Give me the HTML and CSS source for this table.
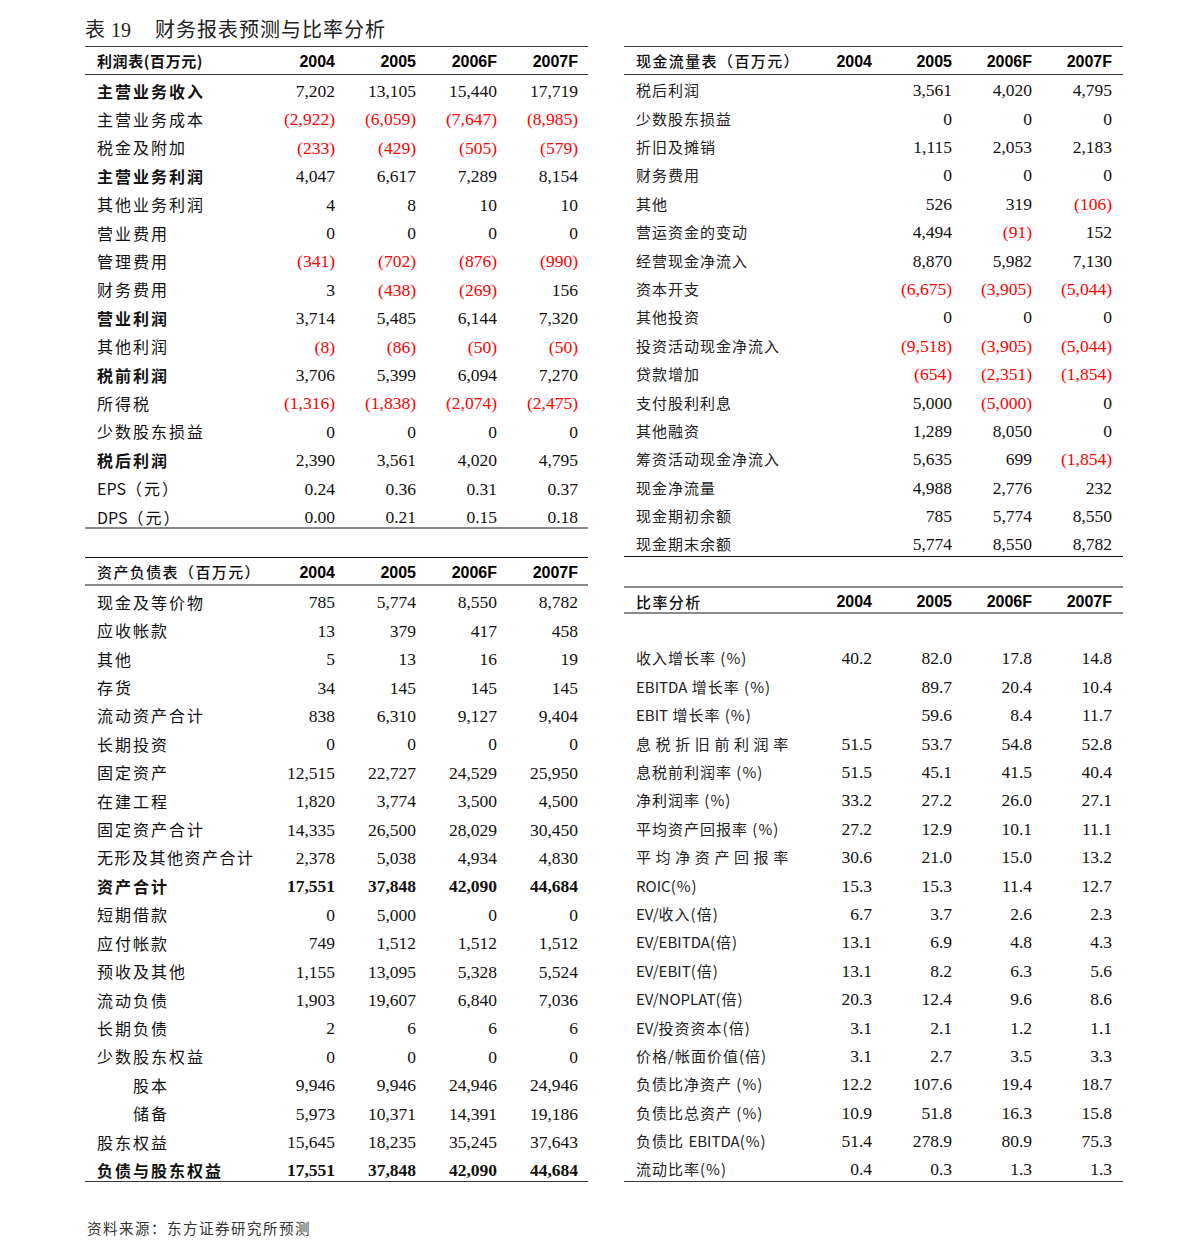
FILE: index.html
```html
<!DOCTYPE html>
<html lang="zh-CN">
<head>
<meta charset="utf-8">
<title>财务报表预测与比率分析</title>
<link rel="stylesheet" href="styles.css">
</head>
<body>
<div class="page">
  <div class="title">表<span class="tnum">19</span><span class="ttext">财务报表预测与比率分析</span></div>
  <div class="cols">
    <div class="col left">
      <div class="tbl">
        <div class="row head t1head"><span class="lab hb">利润表(百万元)</span><span class="y">2004</span><span class="y">2005</span><span class="y">2006F</span><span class="y">2007F</span></div>
        <div class="row"><span class="lab b">主营业务收入</span><span class="n">7,202</span><span class="n">13,105</span><span class="n">15,440</span><span class="n">17,719</span></div>
        <div class="row"><span class="lab">主营业务成本</span><span class="n neg">(2,922)</span><span class="n neg">(6,059)</span><span class="n neg">(7,647)</span><span class="n neg">(8,985)</span></div>
        <div class="row"><span class="lab">税金及附加</span><span class="n neg">(233)</span><span class="n neg">(429)</span><span class="n neg">(505)</span><span class="n neg">(579)</span></div>
        <div class="row"><span class="lab b">主营业务利润</span><span class="n">4,047</span><span class="n">6,617</span><span class="n">7,289</span><span class="n">8,154</span></div>
        <div class="row"><span class="lab">其他业务利润</span><span class="n">4</span><span class="n">8</span><span class="n">10</span><span class="n">10</span></div>
        <div class="row"><span class="lab">营业费用</span><span class="n">0</span><span class="n">0</span><span class="n">0</span><span class="n">0</span></div>
        <div class="row"><span class="lab">管理费用</span><span class="n neg">(341)</span><span class="n neg">(702)</span><span class="n neg">(876)</span><span class="n neg">(990)</span></div>
        <div class="row"><span class="lab">财务费用</span><span class="n">3</span><span class="n neg">(438)</span><span class="n neg">(269)</span><span class="n">156</span></div>
        <div class="row"><span class="lab b">营业利润</span><span class="n">3,714</span><span class="n">5,485</span><span class="n">6,144</span><span class="n">7,320</span></div>
        <div class="row"><span class="lab">其他利润</span><span class="n neg">(8)</span><span class="n neg">(86)</span><span class="n neg">(50)</span><span class="n neg">(50)</span></div>
        <div class="row"><span class="lab b">税前利润</span><span class="n">3,706</span><span class="n">5,399</span><span class="n">6,094</span><span class="n">7,270</span></div>
        <div class="row"><span class="lab">所得税</span><span class="n neg">(1,316)</span><span class="n neg">(1,838)</span><span class="n neg">(2,074)</span><span class="n neg">(2,475)</span></div>
        <div class="row"><span class="lab">少数股东损益</span><span class="n">0</span><span class="n">0</span><span class="n">0</span><span class="n">0</span></div>
        <div class="row"><span class="lab b">税后利润</span><span class="n">2,390</span><span class="n">3,561</span><span class="n">4,020</span><span class="n">4,795</span></div>
        <div class="row"><span class="lab"><span class="lat">EPS</span>（元）</span><span class="n">0.24</span><span class="n">0.36</span><span class="n">0.31</span><span class="n">0.37</span></div>
        <div class="row end-gray"><span class="lab"><span class="lat">DPS</span>（元）</span><span class="n">0.00</span><span class="n">0.21</span><span class="n">0.15</span><span class="n">0.18</span></div>
      </div>
      <div class="row spacer"></div>
      <div class="tbl">
        <div class="row head bshead"><span class="lab">资产负债表（百万元）</span><span class="y">2004</span><span class="y">2005</span><span class="y">2006F</span><span class="y">2007F</span></div>
        <div class="row"><span class="lab">现金及等价物</span><span class="n">785</span><span class="n">5,774</span><span class="n">8,550</span><span class="n">8,782</span></div>
        <div class="row"><span class="lab">应收帐款</span><span class="n">13</span><span class="n">379</span><span class="n">417</span><span class="n">458</span></div>
        <div class="row"><span class="lab">其他</span><span class="n">5</span><span class="n">13</span><span class="n">16</span><span class="n">19</span></div>
        <div class="row"><span class="lab">存货</span><span class="n">34</span><span class="n">145</span><span class="n">145</span><span class="n">145</span></div>
        <div class="row"><span class="lab">流动资产合计</span><span class="n">838</span><span class="n">6,310</span><span class="n">9,127</span><span class="n">9,404</span></div>
        <div class="row"><span class="lab">长期投资</span><span class="n">0</span><span class="n">0</span><span class="n">0</span><span class="n">0</span></div>
        <div class="row"><span class="lab">固定资产</span><span class="n">12,515</span><span class="n">22,727</span><span class="n">24,529</span><span class="n">25,950</span></div>
        <div class="row"><span class="lab">在建工程</span><span class="n">1,820</span><span class="n">3,774</span><span class="n">3,500</span><span class="n">4,500</span></div>
        <div class="row"><span class="lab">固定资产合计</span><span class="n">14,335</span><span class="n">26,500</span><span class="n">28,029</span><span class="n">30,450</span></div>
        <div class="row"><span class="lab tight">无形及其他资产合计</span><span class="n">2,378</span><span class="n">5,038</span><span class="n">4,934</span><span class="n">4,830</span></div>
        <div class="row bn"><span class="lab b">资产合计</span><span class="n">17,551</span><span class="n">37,848</span><span class="n">42,090</span><span class="n">44,684</span></div>
        <div class="row"><span class="lab">短期借款</span><span class="n">0</span><span class="n">5,000</span><span class="n">0</span><span class="n">0</span></div>
        <div class="row"><span class="lab">应付帐款</span><span class="n">749</span><span class="n">1,512</span><span class="n">1,512</span><span class="n">1,512</span></div>
        <div class="row"><span class="lab">预收及其他</span><span class="n">1,155</span><span class="n">13,095</span><span class="n">5,328</span><span class="n">5,524</span></div>
        <div class="row"><span class="lab">流动负债</span><span class="n">1,903</span><span class="n">19,607</span><span class="n">6,840</span><span class="n">7,036</span></div>
        <div class="row"><span class="lab">长期负债</span><span class="n">2</span><span class="n">6</span><span class="n">6</span><span class="n">6</span></div>
        <div class="row"><span class="lab">少数股东权益</span><span class="n">0</span><span class="n">0</span><span class="n">0</span><span class="n">0</span></div>
        <div class="row"><span class="lab ind">股本</span><span class="n">9,946</span><span class="n">9,946</span><span class="n">24,946</span><span class="n">24,946</span></div>
        <div class="row"><span class="lab ind">储备</span><span class="n">5,973</span><span class="n">10,371</span><span class="n">14,391</span><span class="n">19,186</span></div>
        <div class="row"><span class="lab">股东权益</span><span class="n">15,645</span><span class="n">18,235</span><span class="n">35,245</span><span class="n">37,643</span></div>
        <div class="row bn end-dark"><span class="lab b">负债与股东权益</span><span class="n">17,551</span><span class="n">37,848</span><span class="n">42,090</span><span class="n">44,684</span></div>
      </div>
    </div>

    <div class="col right">
      <div class="tbl">
        <div class="row head t1head"><span class="lab">现金流量表（百万元）</span><span class="y">2004</span><span class="y">2005</span><span class="y">2006F</span><span class="y">2007F</span></div>
        <div class="row"><span class="lab">税后利润</span><span class="n"></span><span class="n">3,561</span><span class="n">4,020</span><span class="n">4,795</span></div>
        <div class="row"><span class="lab">少数股东损益</span><span class="n"></span><span class="n">0</span><span class="n">0</span><span class="n">0</span></div>
        <div class="row"><span class="lab">折旧及摊销</span><span class="n"></span><span class="n">1,115</span><span class="n">2,053</span><span class="n">2,183</span></div>
        <div class="row"><span class="lab">财务费用</span><span class="n"></span><span class="n">0</span><span class="n">0</span><span class="n">0</span></div>
        <div class="row"><span class="lab">其他</span><span class="n"></span><span class="n">526</span><span class="n">319</span><span class="n neg">(106)</span></div>
        <div class="row"><span class="lab">营运资金的变动</span><span class="n"></span><span class="n">4,494</span><span class="n neg">(91)</span><span class="n">152</span></div>
        <div class="row"><span class="lab">经营现金净流入</span><span class="n"></span><span class="n">8,870</span><span class="n">5,982</span><span class="n">7,130</span></div>
        <div class="row"><span class="lab">资本开支</span><span class="n"></span><span class="n neg">(6,675)</span><span class="n neg">(3,905)</span><span class="n neg">(5,044)</span></div>
        <div class="row"><span class="lab">其他投资</span><span class="n"></span><span class="n">0</span><span class="n">0</span><span class="n">0</span></div>
        <div class="row"><span class="lab">投资活动现金净流入</span><span class="n"></span><span class="n neg">(9,518)</span><span class="n neg">(3,905)</span><span class="n neg">(5,044)</span></div>
        <div class="row"><span class="lab">贷款增加</span><span class="n"></span><span class="n neg">(654)</span><span class="n neg">(2,351)</span><span class="n neg">(1,854)</span></div>
        <div class="row"><span class="lab">支付股利利息</span><span class="n"></span><span class="n">5,000</span><span class="n neg">(5,000)</span><span class="n">0</span></div>
        <div class="row"><span class="lab">其他融资</span><span class="n"></span><span class="n">1,289</span><span class="n">8,050</span><span class="n">0</span></div>
        <div class="row"><span class="lab">筹资活动现金净流入</span><span class="n"></span><span class="n">5,635</span><span class="n">699</span><span class="n neg">(1,854)</span></div>
        <div class="row"><span class="lab">现金净流量</span><span class="n"></span><span class="n">4,988</span><span class="n">2,776</span><span class="n">232</span></div>
        <div class="row"><span class="lab">现金期初余额</span><span class="n"></span><span class="n">785</span><span class="n">5,774</span><span class="n">8,550</span></div>
        <div class="row end-black"><span class="lab">现金期末余额</span><span class="n"></span><span class="n">5,774</span><span class="n">8,550</span><span class="n">8,782</span></div>
      </div>
      <div class="row spacer"></div>
      <div class="tbl">
        <div class="row head rhead"><span class="lab">比率分析</span><span class="y">2004</span><span class="y">2005</span><span class="y">2006F</span><span class="y">2007F</span></div>
        <div class="row spacer"></div>
        <div class="row"><span class="lab">收入增长率 (%)</span><span class="n">40.2</span><span class="n">82.0</span><span class="n">17.8</span><span class="n">14.8</span></div>
        <div class="row"><span class="lab"><span class="lat">EBITDA</span> 增长率 (%)</span><span class="n"></span><span class="n">89.7</span><span class="n">20.4</span><span class="n">10.4</span></div>
        <div class="row"><span class="lab"><span class="lat">EBIT</span> 增长率 (%)</span><span class="n"></span><span class="n">59.6</span><span class="n">8.4</span><span class="n">11.7</span></div>
        <div class="row"><span class="lab wide">息税折旧前利润率</span><span class="n">51.5</span><span class="n">53.7</span><span class="n">54.8</span><span class="n">52.8</span></div>
        <div class="row"><span class="lab">息税前利润率 (%)</span><span class="n">51.5</span><span class="n">45.1</span><span class="n">41.5</span><span class="n">40.4</span></div>
        <div class="row"><span class="lab">净利润率 (%)</span><span class="n">33.2</span><span class="n">27.2</span><span class="n">26.0</span><span class="n">27.1</span></div>
        <div class="row"><span class="lab">平均资产回报率 (%)</span><span class="n">27.2</span><span class="n">12.9</span><span class="n">10.1</span><span class="n">11.1</span></div>
        <div class="row"><span class="lab wide">平均净资产回报率</span><span class="n">30.6</span><span class="n">21.0</span><span class="n">15.0</span><span class="n">13.2</span></div>
        <div class="row"><span class="lab"><span class="lat">ROIC</span>(%)</span><span class="n">15.3</span><span class="n">15.3</span><span class="n">11.4</span><span class="n">12.7</span></div>
        <div class="row"><span class="lab"><span class="lat">EV/</span>收入(倍)</span><span class="n">6.7</span><span class="n">3.7</span><span class="n">2.6</span><span class="n">2.3</span></div>
        <div class="row"><span class="lab"><span class="lat">EV/EBITDA</span>(倍)</span><span class="n">13.1</span><span class="n">6.9</span><span class="n">4.8</span><span class="n">4.3</span></div>
        <div class="row"><span class="lab"><span class="lat">EV/EBIT</span>(倍)</span><span class="n">13.1</span><span class="n">8.2</span><span class="n">6.3</span><span class="n">5.6</span></div>
        <div class="row"><span class="lab"><span class="lat">EV/NOPLAT</span>(倍)</span><span class="n">20.3</span><span class="n">12.4</span><span class="n">9.6</span><span class="n">8.6</span></div>
        <div class="row"><span class="lab"><span class="lat">EV/</span>投资资本(倍)</span><span class="n">3.1</span><span class="n">2.1</span><span class="n">1.2</span><span class="n">1.1</span></div>
        <div class="row"><span class="lab">价格/帐面价值(倍)</span><span class="n">3.1</span><span class="n">2.7</span><span class="n">3.5</span><span class="n">3.3</span></div>
        <div class="row"><span class="lab">负债比净资产 (%)</span><span class="n">12.2</span><span class="n">107.6</span><span class="n">19.4</span><span class="n">18.7</span></div>
        <div class="row"><span class="lab">负债比总资产 (%)</span><span class="n">10.9</span><span class="n">51.8</span><span class="n">16.3</span><span class="n">15.8</span></div>
        <div class="row"><span class="lab">负债比 <span class="lat">EBITDA</span>(%)</span><span class="n">51.4</span><span class="n">278.9</span><span class="n">80.9</span><span class="n">75.3</span></div>
        <div class="row end-dark"><span class="lab">流动比率(%)</span><span class="n">0.4</span><span class="n">0.3</span><span class="n">1.3</span><span class="n">1.3</span></div>
      </div>
    </div>
  </div>
  <div class="source">资料来源：东方证券研究所预测</div>
</div>
</body>
</html>
```

FILE: styles.css
```css
* {
  box-sizing: border-box;
}

body {
  margin: 0;
  background: #ffffff;
  color: #111111;
  font-family: "Noto Sans CJK SC", "Noto Sans", sans-serif;
}

.page {
  width: 1191px;
  padding-left: 85px;
}

.title {
  height: 45.5px;
  padding-top: 17px;
  line-height: 24px;
  font-size: 20px;
  color: #222222;
  white-space: nowrap;
}

.tnum {
  font-family: "Liberation Serif", serif;
  font-size: 20px;
  margin-left: 6px;
}

.ttext {
  margin-left: 24px;
  letter-spacing: 1px;
}

.cols {
  display: flex;
  gap: 36px;
  align-items: flex-start;
}

.left {
  width: 503px;
}

.right {
  width: 499px;
}

.row {
  display: grid;
  height: 28.41px;
  align-items: center;
  padding-top: 4px;
  white-space: nowrap;
}

.left .row {
  grid-template-columns: minmax(0, 1fr) 81px 81px 81px 81px;
  padding-left: 12px;
  padding-right: 10px;
}

.right .row {
  grid-template-columns: minmax(0, 1fr) 80px 80px 80px 80px;
  padding-left: 12px;
  padding-right: 11px;
}

.lab {
  font-size: 16px;
  letter-spacing: 2px;
  color: #111111;
  padding-bottom: 2px;
  overflow: visible;
}

.right .lab {
  font-size: 15px;
  letter-spacing: 1px;
  color: #222222;
}

.lab .lat {
  letter-spacing: 0;
}

.lab.b {
  font-weight: bold;
}

.lab.tight {
  letter-spacing: 1.5px;
}

.right .lab.wide {
  letter-spacing: 4.6px;
}

.lab.ind {
  padding-left: 36px;
}

.n {
  text-align: right;
  font-family: "Liberation Serif", "Times New Roman", serif;
  font-size: 17.5px;
  color: #111111;
}

.n.neg {
  color: #ff0000;
}

.bn .n {
  font-weight: bold;
}

.head {
  padding-top: 3px;
}

.head .lab,
.right .head .lab {
  font-size: 15px;
  letter-spacing: 1.4px;
  font-weight: 500;
  color: #111111;
}

.head .lab.hb {
  font-weight: bold;
  letter-spacing: 0.6px;
}

.head .y {
  text-align: right;
  font-family: "Liberation Sans", Arial, sans-serif;
  font-weight: bold;
  font-size: 16px;
  color: #000000;
}

.t1head {
  height: 29px;
  border-top: 1.5px solid #3a3a3a;
  border-bottom: 1.5px solid #3a3a3a;
}

.bshead {
  border-top: 1px solid #111111;
  border-bottom: 2px solid #8a8a8a;
}

.rhead {
  border-top: 2px solid #8a8a8a;
  border-bottom: 2px solid #8a8a8a;
}

.end-gray {
  border-bottom: 2px solid #8a8a8a;
}

.end-black {
  border-bottom: 1px solid #111111;
}

.end-dark {
  border-bottom: 1.5px solid #3a3a3a;
}

.source {
  margin-top: 36px;
  padding-left: 2px;
  line-height: 20px;
  font-size: 14.5px;
  letter-spacing: 1.5px;
  color: #333333;
}
```
